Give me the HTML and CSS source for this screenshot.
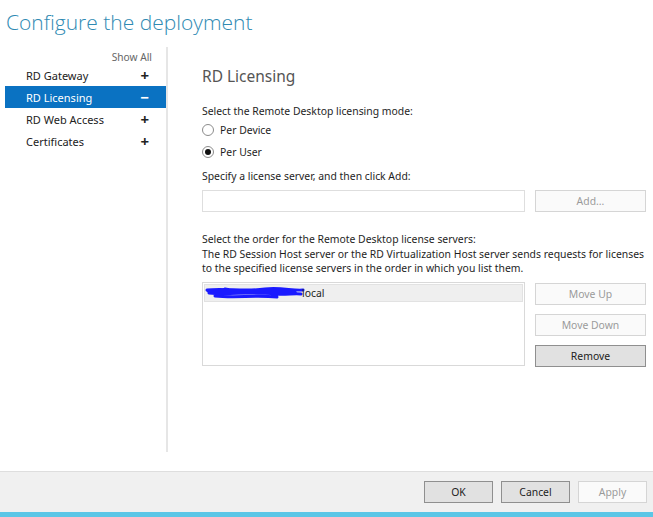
FILE: index.html
```html
<!DOCTYPE html>
<html lang="en">
<head>
<meta charset="UTF-8" />
<title>Configure the deployment</title>
<link rel="stylesheet" href="styles.css">
</head>
<body>
<div class="page">
  <div class="title">Configure the deployment</div>

  <div class="main">
    <!-- left navigation -->
    <div class="nav">
      <div class="show-all">Show All</div>
      <div class="nav-item"><span>RD Gateway</span><span class="sign">+</span></div>
      <div class="nav-item active"><span>RD Licensing</span><span class="sign">&minus;</span></div>
      <div class="nav-item"><span>RD Web Access</span><span class="sign">+</span></div>
      <div class="nav-item"><span>Certificates</span><span class="sign">+</span></div>
    </div>

    <!-- settings pane -->
    <div class="content">
      <h2 class="heading">RD Licensing</h2>
      <div class="label">Select the Remote Desktop licensing mode:</div>
      <label class="radio"><span class="dot"></span>Per Device</label>
      <label class="radio"><span class="dot on"></span>Per User</label>

      <div class="label spaced">Specify a license server, and then click Add:</div>
      <div class="row">
        <div class="textbox"></div>
        <button class="btn disabled">Add...</button>
      </div>

      <div class="info">
        Select the order for the Remote Desktop license servers:<br>
        The RD Session Host server or the RD Virtualization Host server sends requests for licenses
        to the specified license servers in the order in which you list them.
      </div>

      <div class="row">
        <div class="listbox">
          <div class="list-item">
            <svg class="scribble" width="100" height="14" viewBox="0 0 100 14">
              <path d="M2 4 C20 2 40 6 60 3 C75 1 88 5 98 4 M4 7 C25 9 45 5 70 8 C80 9 90 7 96 8 M10 10 C30 12 50 9 72 11 M3 5 L30 6 M20 3 C40 8 60 4 90 6" stroke="#1a1aff" stroke-width="3" fill="none" stroke-linecap="round"/>
            </svg><span class="host">local</span>
          </div>
        </div>
        <div class="side-btns">
          <button class="btn disabled">Move Up</button>
          <button class="btn disabled">Move Down</button>
          <button class="btn pressed">Remove</button>
        </div>
      </div>
    </div>
  </div>

  <div class="footer">
    <button class="btn foot pressed">OK</button>
    <button class="btn foot pressed">Cancel</button>
    <button class="btn foot disabled">Apply</button>
  </div>
  <div class="strip"></div>
</div>
</body>
</html>
```

FILE: styles.css
```css
body { margin: 0; background: #fff; font-family: "Noto Sans", "DejaVu Sans", sans-serif; font-size: 10.4px; color: #1e1e1e; }
.page { width: 653px; height: 517px; display: flex; flex-direction: column; }
.title { height: 47px; padding-left: 6px; font-family: "Open Sans", "Noto Sans", sans-serif; font-weight: 300; font-size: 21px; line-height: 44px; color: #2f8ab3; }
.main { display: flex; height: 405px; }
.nav { width: 161px; padding-left: 5px; border-right: 2px solid #e6e6e6; }
.show-all { text-align: right; padding: 3px 14px 0 0; color: #666; font-size: 10.2px; line-height: 14px; }
.nav-item { display: flex; justify-content: space-between; align-items: center; height: 22px; padding: 0 17px 0 21px; font-size: 11px; color: #222; }
.nav-item.active { background: #0a72c2; color: #fff; }
.sign { font-size: 15px; font-weight: bold; }
.content { flex: 1; padding-left: 34px; padding-top: 19px; }
.heading { margin: 0 0 17px; font-weight: normal; font-size: 15.5px; color: #555; line-height: 20px; }
.label { line-height: 16px; }
.label.spaced { margin-top: 6px; line-height: 15px; }
.radio { display: flex; align-items: center; height: 22px; }
.dot { width: 10px; height: 10px; border: 1px solid #8c8c8c; border-radius: 50%; margin: 0 6px 0 0; position: relative; background: #fff; }
.dot.on::after { content: ""; position: absolute; left: 2px; top: 2px; width: 6px; height: 6px; border-radius: 50%; background: #111; }
.row { display: flex; gap: 10px; margin-top: 6px; }
.textbox { width: 321px; height: 20px; border: 1px solid #dedede; }
.btn { width: 111px; height: 22px; border: 1px solid #cfcfcf; background: #fdfdfd; font-family: inherit; font-size: 10.4px; color: #222; padding: 0; }
.btn.disabled { color: #9a9a9a; border-color: #d5d5d5; background: #fafafa; }
.btn.pressed { background: #e1e1e1; border-color: #8f8f8f; }
.info { margin-top: 20px; line-height: 14.5px; }
.info + .row { margin-top: 6px; }
.listbox { width: 319px; height: 80px; border: 1px solid #d9d9d9; padding: 1px; box-sizing: content-box; }
.list-item { height: 16px; background: #efefef; border: 1px solid #e2e2e2; display: flex; align-items: center; }
.scribble { flex: none; }
.host { margin-left: -3px; }
.side-btns { display: flex; flex-direction: column; gap: 9px; margin-top: 1px; }
.footer { margin-top: 19px; height: 40px; background: #f0f0f0; border-top: 1px solid #dedede; display: flex; justify-content: flex-end; align-items: center; gap: 8px; padding-right: 6px; }
.btn.foot { width: 69px; height: 22px; }
.strip { height: 5px; background: #5bc6e6; }
```
